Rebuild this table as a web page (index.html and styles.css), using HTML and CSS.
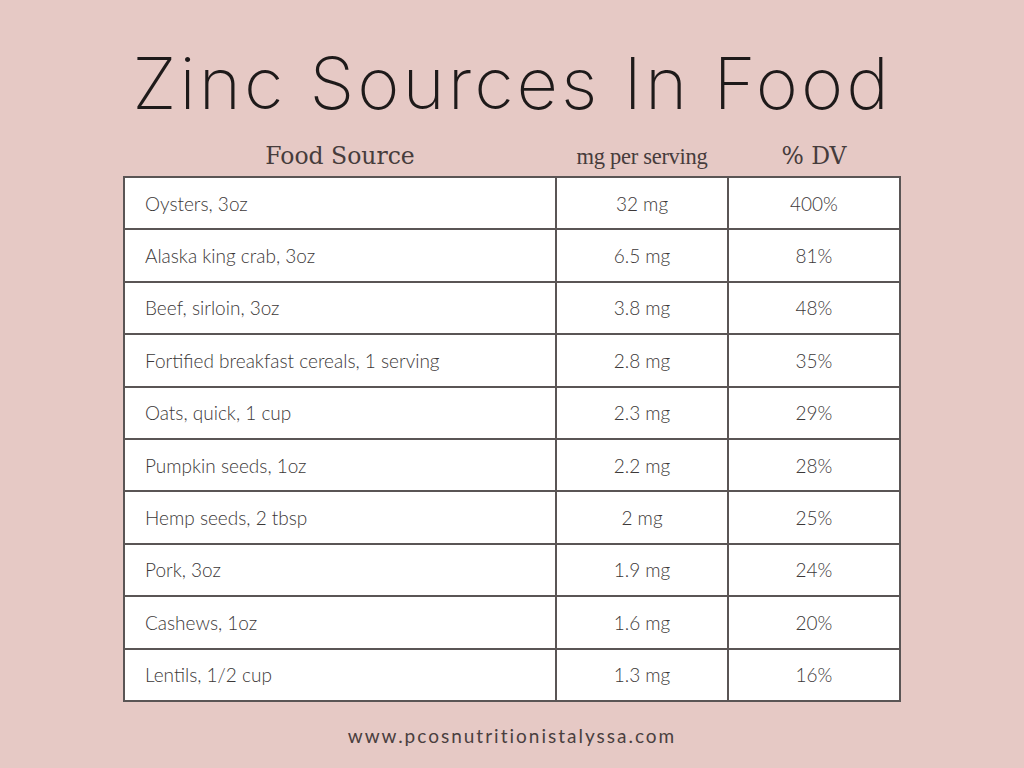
FILE: index.html
```html
<!DOCTYPE html>
<html>
<head>
<meta charset="utf-8">
<link rel="stylesheet" href="styles.css">
</head>
<body>
<main class="page">
  <h1 class="title">Zinc Sources In Food</h1>
  <table class="zinc">
    <thead>
      <tr>
        <th class="h-food">Food Source</th>
        <th class="h-mg">mg per serving</th>
        <th class="h-dv">% DV</th>
      </tr>
    </thead>
    <tbody>
      <tr><td class="food">Oysters, 3oz</td><td>32 mg</td><td>400%</td></tr>
      <tr><td class="food">Alaska king crab, 3oz</td><td>6.5 mg</td><td>81%</td></tr>
      <tr><td class="food">Beef, sirloin, 3oz</td><td>3.8 mg</td><td>48%</td></tr>
      <tr><td class="food">Fortified breakfast cereals, 1 serving</td><td>2.8 mg</td><td>35%</td></tr>
      <tr><td class="food">Oats, quick, 1 cup</td><td>2.3 mg</td><td>29%</td></tr>
      <tr><td class="food">Pumpkin seeds, 1oz</td><td>2.2 mg</td><td>28%</td></tr>
      <tr><td class="food">Hemp seeds, 2 tbsp</td><td>2 mg</td><td>25%</td></tr>
      <tr><td class="food">Pork, 3oz</td><td>1.9 mg</td><td>24%</td></tr>
      <tr><td class="food">Cashews, 1oz</td><td>1.6 mg</td><td>20%</td></tr>
      <tr><td class="food">Lentils, 1/2 cup</td><td>1.3 mg</td><td>16%</td></tr>
    </tbody>
  </table>
  <p class="site">www.pcosnutritionistalyssa.com</p>
</main>
</body>
</html>
```

FILE: styles.css
```css
html, body {
  margin: 0;
  padding: 0;
  background: #e6c9c5;
}
.page {
  width: 1024px;
  height: 768px;
  display: flex;
  flex-direction: column;
  align-items: center;
  box-sizing: border-box;
  padding-top: 38px;
}
.title {
  margin: 0;
  font-family: "Inter", sans-serif;
  font-weight: 200;
  font-size: 72px;
  line-height: 90px;
  letter-spacing: 3px;
  color: #1e1a1a;
}
.zinc {
  margin-top: 2px;
  border-collapse: collapse;
  table-layout: fixed;
  width: 777px;
}
.zinc th {
  font-weight: 400;
  color: #463c3c;
  height: 40px;
  padding: 0 0 6px;
  vertical-align: bottom;
  text-align: center;
}
.h-food {
  width: 432px;
  font-family: "DejaVu Serif", serif;
  font-size: 23.5px;
}
.h-mg {
  width: 172px;
  font-family: "Liberation Serif", serif;
  font-size: 22.5px;
  letter-spacing: -0.3px;
}
.h-dv {
  width: 172px;
  font-family: "DejaVu Serif", serif;
  font-size: 23.5px;
}
.zinc td {
  background: #ffffff;
  border: 2px solid #5a5555;
  height: 50.4px;
  padding: 0;
  text-align: center;
  font-family: "Lato", sans-serif;
  font-weight: 300;
  font-size: 19px;
  color: #3c3838;
}
.zinc td.food {
  text-align: left;
  padding-left: 20px;
}
.site {
  margin: 22px 0 0;
  font-family: "Lato", sans-serif;
  font-size: 19px;
  letter-spacing: 2px;
  color: #4a3f3f;
}
```
